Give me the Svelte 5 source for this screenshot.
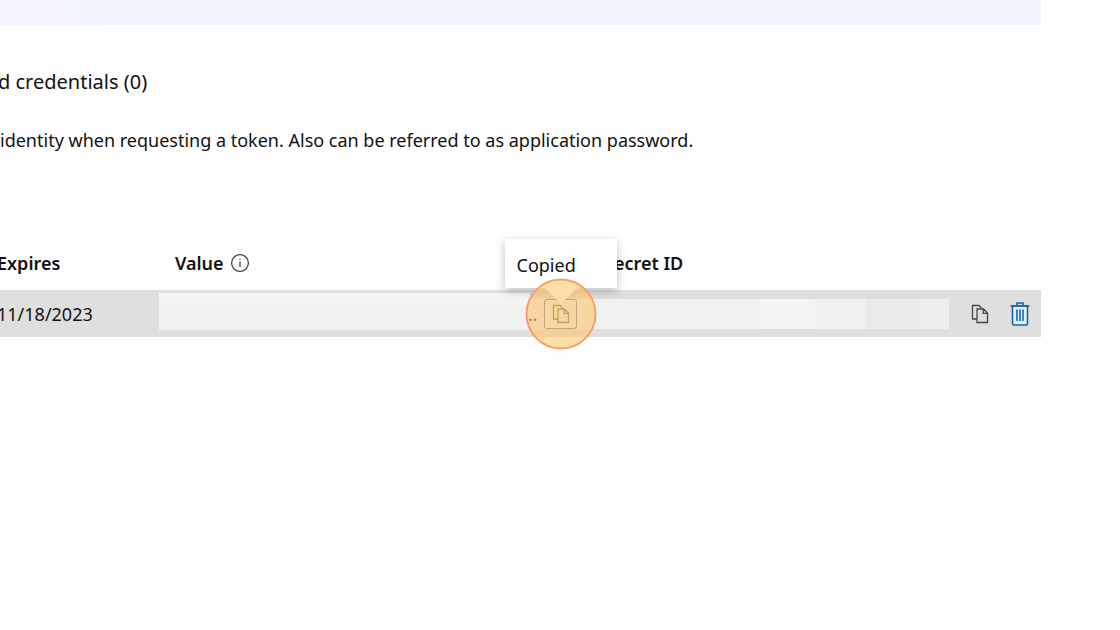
<script>
  let copied = $state(true);
</script>

{#snippet copyIcon()}
  <svg class="copy-icon" viewBox="0 0 18 20" width="18" height="20" aria-hidden="true">
    <path d="M6 15H1.5V1.5H8L10.5 4M6 5H12.5L16.5 9V18.5H6ZM12.2 5.2V9.3H16.3" />
  </svg>
{/snippet}

<main>
  <div class="banner"></div>
  <h2>d credentials (0)</h2>
  <p class="description">identity when requesting a token. Also can be referred to as application password.</p>

  <table>
    <colgroup>
      <col class="col-expires" />
      <col class="col-value" />
      <col />
    </colgroup>
    <thead>
      <tr>
        <th class="first">Expires</th>
        <th class="value-head">
          <span class="heading">
            Value
            <svg viewBox="0 0 20 20" width="20" height="20" aria-hidden="true">
              <circle cx="10" cy="10" r="8.4" />
              <path d="M10 8.5V14M10 5.7V7" />
            </svg>
          </span>
        </th>
        <th class="secret-head">Secret ID</th>
      </tr>
    </thead>
    <tbody>
      <tr>
        <td class="first">11/18/2023</td>
        <td>
          <div class="line">
            <div class="value-mask"></div>
            <div class="value-end">
              <span>..</span>
              <div class="anchor">
                <button class="boxed" aria-label="Copy value" onclick={() => (copied = true)}>
                  {@render copyIcon()}
                </button>
                {#if copied}
                  <div class="tooltip" role="status">Copied</div>
                {/if}
                <div class="marker"></div>
              </div>
            </div>
          </div>
        </td>
        <td>
          <div class="line">
            <div class="secret-mask"></div>
            <button class="plain" aria-label="Copy secret ID">{@render copyIcon()}</button>
            <button class="delete" aria-label="Delete secret">
              <svg viewBox="0 0 20 24" width="20" height="24" aria-hidden="true">
                <path class="bin" d="M2.5 4V21.5Q2.5 23 4 23H16Q17.5 23 17.5 21.5V4Z" />
                <path d="M0.5 4H19.5M7 3.5V1H13V3.5M7 7.5V19M10 7.5V19M13 7.5V19" />
              </svg>
            </button>
          </div>
        </td>
      </tr>
    </tbody>
  </table>
</main>

<style>
  :global(body) {
    margin: 0;
    background: #fff;
  }

  main {
    box-sizing: border-box;
    min-height: 100vh;
    padding-right: 79px;
    color: #111;
    font: 18px/28px "Noto Sans", sans-serif;
  }

  .banner {
    height: 25px;
    background: linear-gradient(90deg, #f5f5ff, #f1f4ff 12%);
  }

  h2 {
    margin: 43px 0 0;
    font-size: 20px;
    font-weight: 400;
    line-height: 28px;
    text-indent: -2px;
  }

  .description {
    margin: 30px 0 0;
  }

  table {
    width: 100%;
    margin-top: 82px;
    border-collapse: collapse;
    table-layout: fixed;
  }

  .col-expires {
    width: 159px;
  }

  .col-value {
    width: 429px;
  }

  th,
  td {
    padding: 0;
    text-align: left;
  }

  th {
    height: 54px;
    font-weight: 600;
  }

  td {
    height: 47px;
    background: #e0dfdf;
  }

  .first {
    text-indent: -3px;
  }

  .value-head,
  .secret-head {
    padding-left: 16px;
  }

  .heading {
    display: flex;
    align-items: center;
    gap: 6px;
  }

  svg {
    display: block;
    fill: none;
    stroke: #444;
    stroke-width: 1.3;
  }

  .line {
    display: flex;
    align-items: center;
  }

  .value-mask {
    width: 371px;
    height: 37px;
    margin-bottom: 4px;
    background: linear-gradient(#f7f7f7, #f3f2f3 40%);
  }

  .value-end {
    display: flex;
    flex: 1;
    align-items: center;
    justify-content: space-between;
    height: 30px;
    padding-right: 11px;
    background: #f1f1f1;
  }

  .value-end span {
    margin-left: -2px;
  }

  .secret-mask {
    flex: 1;
    height: 30px;
    margin-right: 20px;
    background: linear-gradient(
      90deg,
      #f1f1f1 0 48%,
      #f4f4f4 48% 63%,
      #f0f0f0 63% 77%,
      #eaeaea 77% 92%,
      #eee 92%
    );
  }

  button {
    display: grid;
    place-items: center;
    padding: 0;
    border: 0;
    background: none;
    cursor: pointer;
  }

  .anchor {
    position: relative;
  }

  .boxed {
    box-sizing: border-box;
    width: 33px;
    height: 30px;
    border: 1px solid #579;
    border-radius: 3px;
  }

  .boxed svg {
    stroke: #666;
  }

  .plain {
    width: 22px;
    height: 30px;
    margin-right: 19px;
  }

  .delete {
    width: 20px;
    height: 30px;
    margin-right: 11px;
  }

  .delete svg {
    stroke: #1464ad;
    stroke-width: 1.6;
  }

  .bin {
    fill: #e6f2fb;
  }

  .tooltip {
    position: absolute;
    bottom: 41px;
    left: 50%;
    box-sizing: border-box;
    width: 112px;
    padding: 12px 12px 9px;
    transform: translateX(-50%);
    background: #fff;
    box-shadow: 0 3px 9px #0004;
  }

  .tooltip::after {
    position: absolute;
    top: 100%;
    left: 50%;
    border: 16px solid transparent;
    border-top-color: #fff;
    border-bottom: 0;
    transform: translateX(-50%);
    content: "";
  }

  .marker {
    position: absolute;
    inset: 50% auto auto 50%;
    box-sizing: border-box;
    width: 71px;
    height: 71px;
    border: 2px solid #f2a06c;
    border-radius: 50%;
    transform: translate(-50%, -50%);
    background: #ffc66a99;
    pointer-events: none;
  }
</style>
